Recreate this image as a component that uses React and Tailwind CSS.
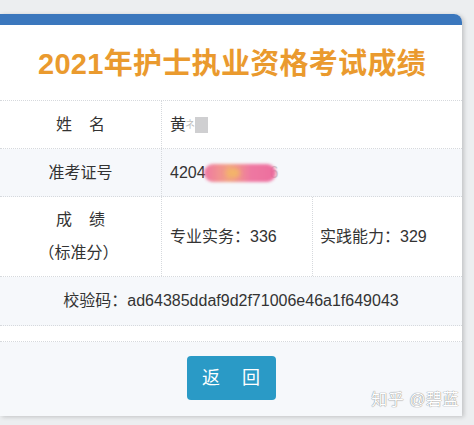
import React from "react";

const font = { fontFamily: '"Liberation Sans", "Noto Sans CJK SC", sans-serif' };

export default function App() {
  return (
    <div className="w-[474px] h-[425px] bg-[#eceef0] pt-[14px] overflow-hidden" style={font}>
      <div className="relative w-[462px] h-[402px] bg-white rounded-tr-[8px] overflow-hidden shadow-[2px_1px_4px_rgba(0,0,0,0.18)] flex flex-col">
        <div className="h-[11px] bg-[#3b77bd]" />
        <div className="h-[76px] flex items-center justify-center pt-[4px] border-b border-dotted border-[#d6d9dd]">
          <h1 className="text-[29px] font-bold text-[#ea9a2e] tracking-[0.3px] pl-[2px]">
            2021年护士执业资格考试成绩
          </h1>
        </div>

        {/* 姓名 */}
        <div className="h-[48px] flex border-b border-dotted border-[#d6d9dd] text-[16px] text-[#333]">
          <div className="w-[162px] flex items-center justify-center border-r border-dotted border-[#d6d9dd]">
            姓<span className="w-[17px]" />名
          </div>
          <div className="flex-1 flex items-center pl-[8px]">
            黄
            <span className="text-[#bbb] text-[10px] -ml-[1px]">ネ</span>
            <span className="w-[13px] h-[16px] bg-[#cfcfd1]" />
          </div>
        </div>

        {/* 准考证号 */}
        <div className="h-[48px] flex border-b border-dotted border-[#d6d9dd] bg-[#f6f8fb] text-[16px] text-[#333]">
          <div className="w-[162px] flex items-center justify-center border-r border-dotted border-[#d6d9dd]">
            准考证号
          </div>
          <div className="flex-1 flex items-center pl-[8px]">
            <span>4204</span>
            <span className="relative w-[72px] h-[18px] -ml-[2px]">
              <span className="absolute inset-0 rounded-full bg-[linear-gradient(90deg,#ef6a9a,#f29a78_35%,#ee6b98_65%,#ec5f95)] blur-[1.5px] opacity-90" />
              <span className="absolute left-[22px] top-[4px] w-[14px] h-[10px] rounded-full bg-[#f3b36a] blur-[2px]" />
            </span>
            <span className="text-[#ccc] -ml-[6px]">6</span>
          </div>
        </div>

        {/* 成绩 */}
        <div className="h-[80px] flex border-b border-dotted border-[#d6d9dd] text-[16px] text-[#333]">
          <div className="w-[162px] flex flex-col items-center justify-center gap-[9px] border-r border-dotted border-[#d6d9dd]">
            <div>
              成<span className="inline-block w-[17px]" />绩
            </div>
            <div className="-ml-[4px]">（标准分）</div>
          </div>
          <div className="w-[151px] flex items-center pl-[8px] border-r border-dotted border-[#d6d9dd]">
            专业实务：336
          </div>
          <div className="flex-1 flex items-center pl-[7px]">实践能力：329</div>
        </div>

        {/* 校验码 */}
        <div className="h-[49px] flex items-center justify-center border-b border-dotted border-[#d6d9dd] bg-[#f6f8fb] text-[16px] text-[#333]">
          校验码：ad64385ddaf9d2f71006e46a1f649043
        </div>

        <div className="h-[16px] border-b border-dotted border-[#d6d9dd]" />

        <div className="flex-1 bg-[#f6f8fb] flex justify-center pt-[14px]">
          <button className="w-[89px] h-[44px] rounded-[4px] bg-[#2a9ac6] text-white text-[18px] flex items-center justify-center">
            返<span className="inline-block w-[22px]" />回
          </button>
        </div>

        <div
          className="absolute right-[3px] bottom-[4px] text-[16px] text-white tracking-[0.5px]"
          style={{ textShadow: "0 0 1px #8a8a8a, 0 0 1px #8a8a8a" }}
        >
          知乎 @碧蓝
        </div>
      </div>
    </div>
  );
}
